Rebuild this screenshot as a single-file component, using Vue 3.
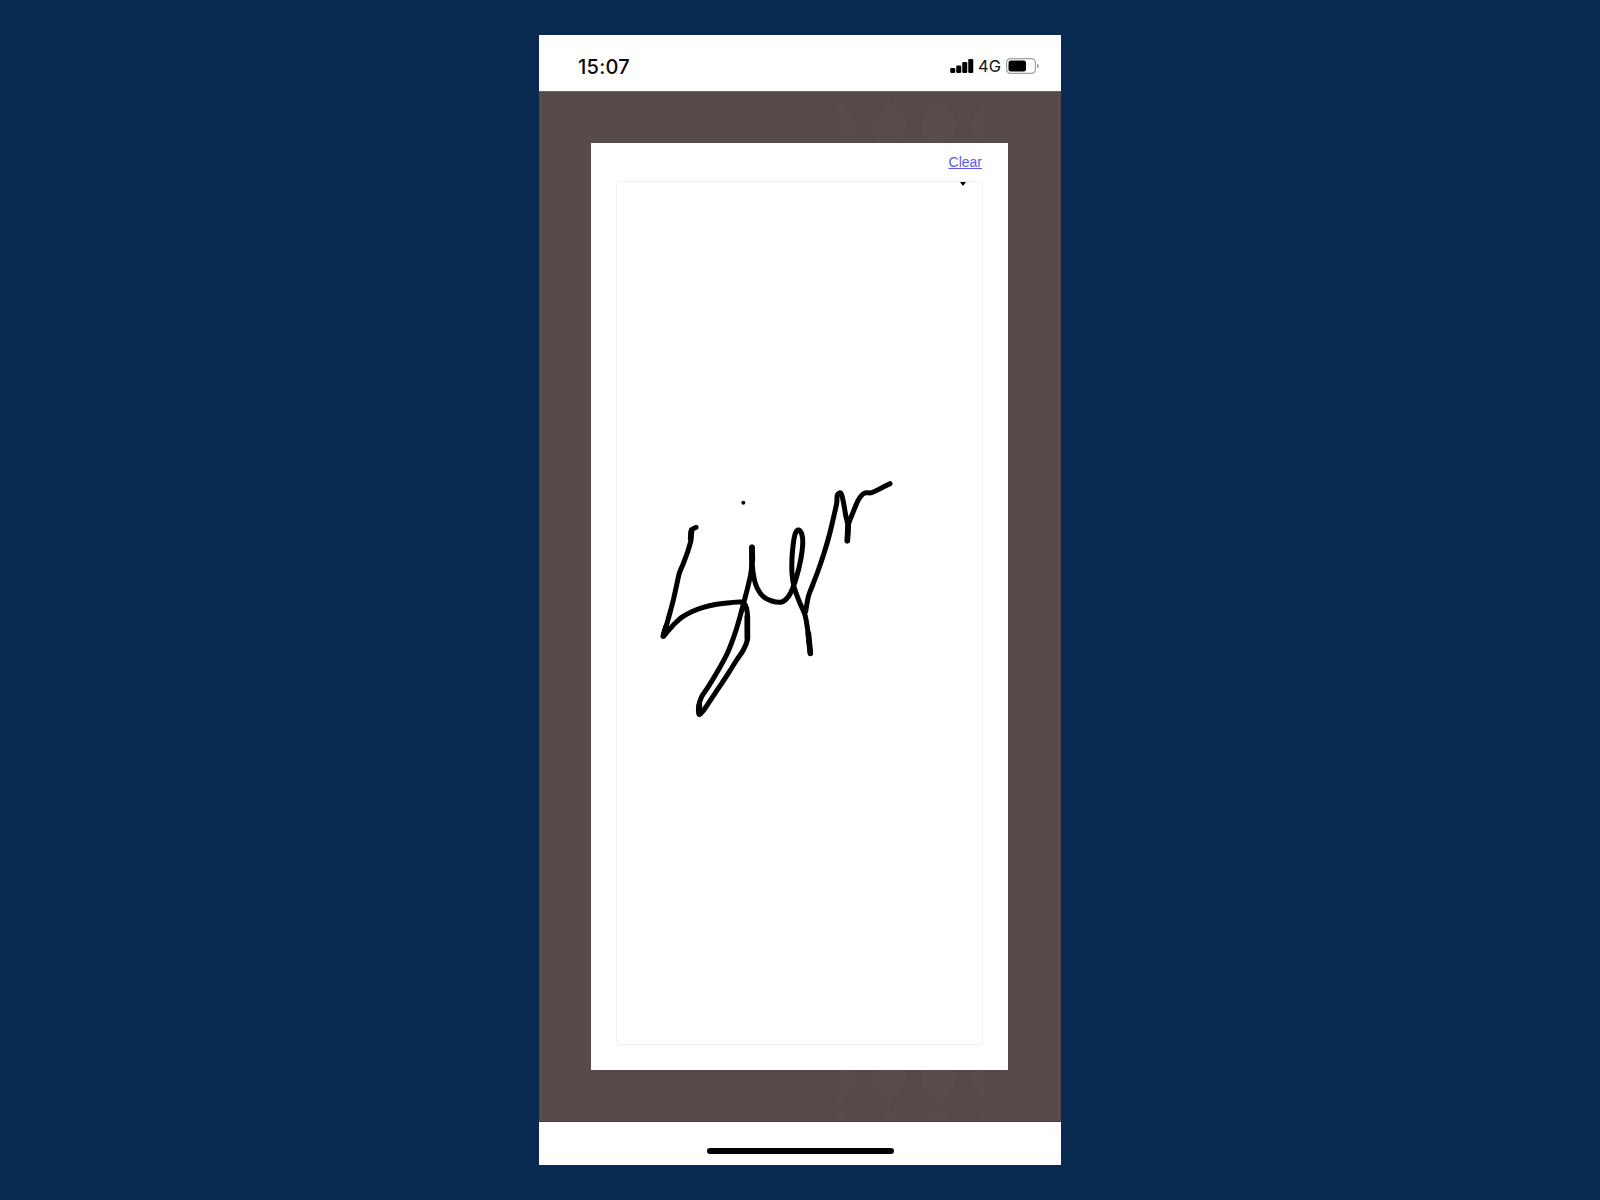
<script setup>
const bars = [
  { x: 0, y: 9, h: 5 },
  { x: 6, y: 6.5, h: 7.5 },
  { x: 12, y: 3, h: 11 },
  { x: 18, y: 0, h: 14 },
]

function smooth(points) {
  let d = `M${points[0][0]} ${points[0][1]}`
  for (let i = 0; i < points.length - 1; i++) {
    const p0 = points[Math.max(i - 1, 0)]
    const p1 = points[i]
    const p2 = points[i + 1]
    const p3 = points[Math.min(i + 2, points.length - 1)]
    const c1x = p1[0] + (p2[0] - p0[0]) / 6
    const c1y = p1[1] + (p2[1] - p0[1]) / 6
    const c2x = p2[0] - (p3[0] - p1[0]) / 6
    const c2y = p2[1] - (p3[1] - p1[1]) / 6
    d += ` C${c1x} ${c1y} ${c2x} ${c2y} ${p2[0]} ${p2[1]}`
  }
  return d
}

const strokes = [
  [[168,172],[155,180],[152,195],[153,210],[143,245],[130,280],[118,310],[110,345],[100,390],[88,435],[78,470],[70,498],[85,482],[105,460],[125,442],[155,425],[190,412],[230,403],[270,398],[303,396],[316,405],[322,430],[322,470],[322,510],[310,540],[290,570],[265,610],[235,655],[205,700],[190,722],[178,732],[176,710],[185,680],[205,650],[235,600],[262,550],[285,490],[300,440],[312,395],[325,345],[334,300],[336,232]],
  [[336,232],[337,285],[342,325],[352,355],[370,380],[395,393],[425,396],[445,380],[458,355],[470,320],[482,270],[488,225],[486,195],[476,180],[466,190],[460,220],[456,265],[456,310],[462,350],[478,395],[495,435],[503,480],[507,515],[511,550]],
  [[497,425],[505,380],[518,345],[535,300],[552,250],[568,195],[580,145],[590,100],[592,75],[603,70],[610,95],[617,135],[624,170],[622,212]],
  [[622,212],[625,165],[640,125],[655,90],[672,70],[695,68],[720,56],[750,41]],
].map(smooth)

const heavy = [
  'M155 180 L152 205',
  'M336 232 L337 270',
  'M505 490 L511 550',
  'M624 170 L622 212',
  'M70 498 L78 470',
  'M322 440 L322 505',
  'M178 732 L178 705',
]
</script>

<template>
  <main class="page">
    <section class="phone">
      <header class="status">
        <span class="time">15:07</span>
        <div class="indicators">
          <svg class="signal" width="24" height="14" viewBox="0 0 23.5 14" aria-hidden="true">
            <rect v-for="b in bars" :key="b.x" :x="b.x" :y="b.y" width="5" :height="b.h" rx="1.2" fill="#000" />
          </svg>
          <span class="network">4G</span>
          <svg class="battery" width="33" height="16" viewBox="0 0 33 16" aria-hidden="true">
            <rect x="0.6" y="0.6" width="28.8" height="14.8" rx="4" fill="none" stroke="#a0a0a0" stroke-width="1.2" />
            <rect x="2.5" y="2.5" width="17.5" height="11" rx="2.2" fill="#000" />
            <path d="M31 5.8 C32.4 6.3 32.8 7 32.8 8 C32.8 9 32.4 9.7 31 10.2 Z" fill="#999" />
          </svg>
        </div>
      </header>

      <div class="stage">
        <svg class="damask" width="217" height="1031" aria-hidden="true">
          <defs>
            <pattern id="ogee" width="50" height="56" patternUnits="userSpaceOnUse" x="-4" y="6">
              <path d="M25 0 C34 12 44 16 44 28 C44 40 34 44 25 56 C16 44 6 40 6 28 C6 16 16 12 25 0 Z" fill="rgba(255,255,255,.012)" stroke="rgba(0,0,0,.02)" stroke-width="3" />
            </pattern>
            <linearGradient id="fade">
              <stop offset="0" stop-color="#fff" stop-opacity="0" />
              <stop offset="0.45" stop-color="#fff" stop-opacity="0.7" />
              <stop offset="1" stop-color="#fff" stop-opacity="1" />
            </linearGradient>
            <mask id="fadeMask">
              <rect width="217" height="1031" fill="url(#fade)" />
            </mask>
          </defs>
          <rect width="217" height="1031" fill="url(#ogee)" mask="url(#fadeMask)" />
        </svg>

        <div class="card">
          <div class="actions"><a class="clear" href="#">Clear</a></div>
          <div class="pad">
            <span class="tick"></span>
            <svg class="signature" width="270" height="260" viewBox="0 0 810 780" aria-hidden="true">
              <circle cx="310" cy="98" r="6" fill="#000" />
              <g fill="none" stroke="#000" stroke-linecap="round" stroke-linejoin="round">
                <path v-for="(d, i) in strokes" :key="i" :d="d" stroke-width="15" />
                <path v-for="(d, i) in heavy" :key="'h' + i" :d="d" stroke-width="17" />
              </g>
            </svg>
          </div>
        </div>
      </div>

      <footer class="home"><span class="indicator"></span></footer>
    </section>
  </main>
</template>

<style>
html,
body {
  margin: 0;
  background: #092a51;
}
</style>

<style scoped>
.page {
  box-sizing: border-box;
  width: 1600px;
  height: 1200px;
  padding-top: 35px;
  display: flex;
  justify-content: center;
  align-items: flex-start;
  background: #092a51;
}

.phone {
  width: 522px;
  height: 1130px;
  display: flex;
  flex-direction: column;
  background: #fff;
}

.status {
  height: 56px;
  flex: none;
  box-sizing: border-box;
  padding: 7px 21px 0 39px;
  display: flex;
  align-items: center;
  justify-content: space-between;
  background: #fff;
}

.time {
  font-family: Inter, "Liberation Sans", sans-serif;
  font-size: 20px;
  font-weight: 500;
  letter-spacing: 0.25px;
  color: #0a0a0a;
}

.indicators {
  display: flex;
  align-items: center;
  gap: 5px;
  margin-top: -2px;
}

.signal {
  margin-right: -1px;
}

.network {
  font-family: Inter, "Liberation Sans", Arial, sans-serif;
  font-size: 16.5px;
  color: #111;
}

.battery {
  margin-right: 1px;
}

.stage {
  position: relative;
  height: 1031px;
  flex: none;
  box-sizing: border-box;
  padding: 51px 53px 53px 52px;
  background: #574b4a;
  border-top: 1px solid #6f6463;
  border-bottom: 1px solid #4f4342;
  overflow: hidden;
}

.damask {
  position: absolute;
  left: 229px;
  top: 0;
}

.card {
  position: relative;
  box-sizing: border-box;
  height: 927px;
  padding: 0 25px 25px;
  display: flex;
  flex-direction: column;
  background: #fff;
}

.actions {
  height: 38px;
  flex: none;
  display: flex;
  justify-content: flex-end;
  align-items: center;
  padding-right: 1px;
}

.clear {
  font-family: "Liberation Sans", Arial, sans-serif;
  font-size: 14px;
  line-height: 16px;
  color: #5b5be6;
  text-decoration: underline;
}

.pad {
  position: relative;
  flex: 1;
  border: 1px solid #f0f0f0;
  border-radius: 4px;
  background: #fff;
}

.tick {
  position: absolute;
  left: 343px;
  top: 0;
  width: 0;
  height: 0;
  border-left: 3px solid transparent;
  border-right: 3px solid transparent;
  border-top: 4px solid #000;
}

.signature {
  position: absolute;
  left: 23px;
  top: 288px;
}

.home {
  flex: 1;
  display: flex;
  justify-content: center;
  align-items: flex-start;
  padding-top: 26px;
  background: #fff;
}

.indicator {
  width: 187px;
  height: 6px;
  border-radius: 3px;
  background: #000;
}
</style>
